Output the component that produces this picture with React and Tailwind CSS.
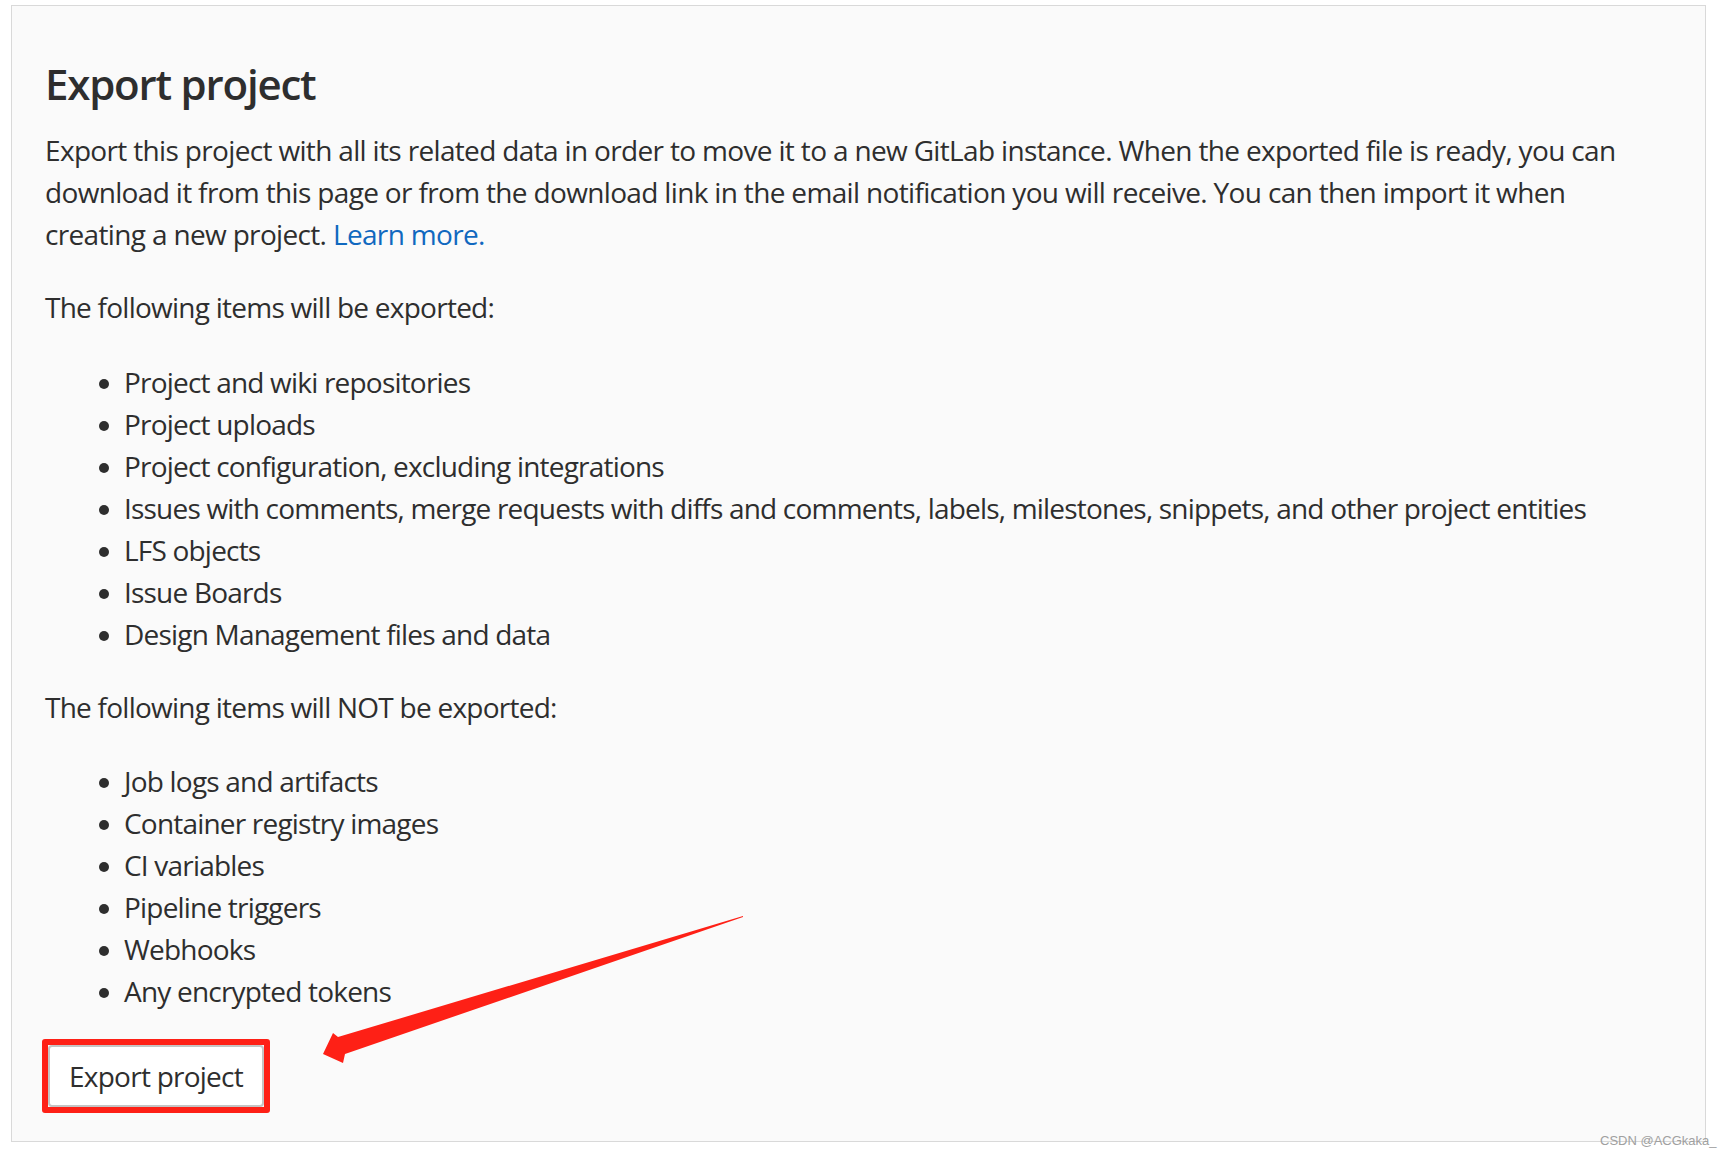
export default function App() {
  const exported = [
    'Project and wiki repositories',
    'Project uploads',
    'Project configuration, excluding integrations',
    'Issues with comments, merge requests with diffs and comments, labels, milestones, snippets, and other project entities',
    'LFS objects',
    'Issue Boards',
    'Design Management files and data',
  ];
  const notExported = [
    'Job logs and artifacts',
    'Container registry images',
    'CI variables',
    'Pipeline triggers',
    'Webhooks',
    'Any encrypted tokens',
  ];

  const List = ({ items }) => (
    <ul className="pl-[54px] tracking-[-0.8px]">
      {items.map((item) => (
        <li key={item} className="flex h-[42px] whitespace-nowrap">
          <span className="mt-[18px] w-[10px] h-[10px] rounded-full bg-[#2e2e2e] shrink-0" />
          <span className="ml-[15px]">{item}</span>
        </li>
      ))}
    </ul>
  );

  return (
    <div
      className="relative w-[1729px] h-[1157px] bg-white text-[#2e2e2e]"
      style={{ fontFamily: '"Open Sans", "Noto Sans", sans-serif' }}
    >
      {/* PANEL */}
      <div className="absolute left-[11px] top-[5px] w-[1695px] h-[1137px] border border-[#d9d9d9] bg-[#fafafa] pl-[33px] pt-[53px] text-[28px] leading-[42px] tracking-[-0.75px]">
        <h4 className="text-[42px] leading-[50px] font-semibold tracking-[-1.2px]">Export project</h4>

        <p className="mt-[20px] whitespace-nowrap tracking-[-0.66px]">
          Export this project with all its related data in order to move it to a new GitLab instance. When the exported file is ready, you can
          <br />
          download it from this page or from the download link in the email notification you will receive. You can then import it when
          <br />
          creating a new project. <a className="text-[#1068bf]">Learn more.</a>
        </p>

        <p className="mt-[31px]">The following items will be exported:</p>
        <div className="mt-[33px]">
          <List items={exported} />
        </div>

        <p className="mt-[31px]">The following items will NOT be exported:</p>
        <div className="mt-[32px]">
          <List items={notExported} />
        </div>

        {/* BUTTON (annotated) */}
        <div className="mt-[27px] -ml-[3px] inline-flex rounded-[3px] border-[6px] border-[#fe2016]">
          <button className="h-[62px] px-[19px] bg-white border-2 border-[#c4c4c4] rounded-[4px] text-[28px] text-[#2e2e2e]">
            Export project
          </button>
        </div>
      </div>

      {/* ARROW ANNOTATION */}
      <svg className="absolute left-0 top-0 pointer-events-none" width="1729" height="1157">
        <polygon
          points="743,916 338,1037 333,1033 323,1054 343,1063 345,1054 743,917"
          fill="#fe2016"
        />
      </svg>

      {/* WATERMARK */}
      <span
        className="absolute left-[1600px] top-[1133px] text-[13px] leading-[16px] text-[#a0a0a0]"
        style={{ fontFamily: '"Liberation Sans", Arial, sans-serif' }}
      >
        CSDN @ACGkaka_
      </span>
    </div>
  );
}
